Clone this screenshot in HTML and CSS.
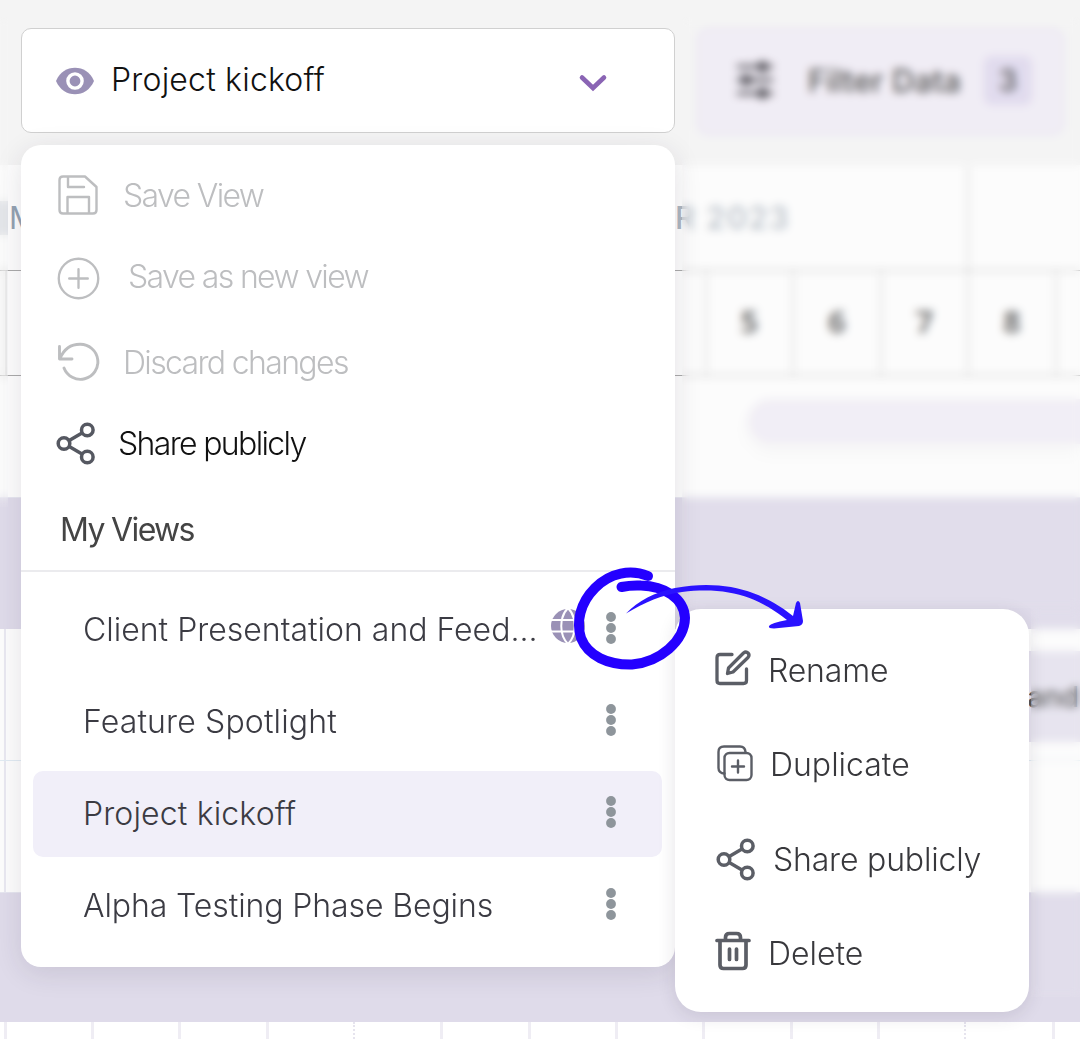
FILE: index.html
```html
<!DOCTYPE html>
<html lang="en">
<head>
<meta charset="utf-8">
<title>Project views</title>
<link rel="stylesheet" href="styles.css">
</head>
<body>
<svg class="sprite" aria-hidden="true">
  <symbol id="share" viewBox="0 0 40 44">
    <g fill="none" stroke="currentColor" stroke-width="3.5"><circle cx="8" cy="21.500" r="5.800"/><circle cx="31.300" cy="8" r="5.800"/><circle cx="31.300" cy="35" r="5.800"/><path d="M13.200 18.500 26 11.100M13.200 24.500 26 31.900"/></g>
  </symbol>
  <symbol id="dots" viewBox="0 0 10 32">
    <g fill="currentColor"><circle cx="5" cy="5" r="4.900"/><circle cx="5" cy="16" r="4.900"/><circle cx="5" cy="27" r="4.900"/></g>
  </symbol>
</svg>
<div class="page">
  <header class="toolbar">
    <div class="select">
      <svg class="eye" viewBox="0 0 40 28"><path fill="#9a91b6" d="M1 14C5 5 12 .800 20 .800S35 5 39 14C35 23 28 27.200 20 27.200S5 23 1 14Z"/><circle cx="20" cy="14" r="7.100" fill="#9a91b6" stroke="#fff" stroke-width="3.400"/></svg>
      <span class="select-text">Project kickoff</span>
      <svg class="chevron" viewBox="0 0 28 18"><path d="M3 3.500 14 14 25 3.500" fill="none" stroke="#8a64b4" stroke-width="4.600" stroke-linecap="round"/></svg>
    </div>
    <div class="filter">
      <svg class="sliders" viewBox="0 0 40 40"><g stroke="#4a4850" stroke-width="4" fill="none"><path d="M1 6h38M1 20h38M1 34h38"/></g><g fill="#4a4850"><circle cx="28" cy="6" r="6"/><circle cx="11" cy="20" r="6"/><circle cx="28" cy="34" r="6"/></g></svg>
      <span class="filter-text">Filter Data</span><span class="count">3</span>
    </div>
  </header>
  <div class="months">
    <div class="month prev"><i></i>M</div><div class="month current">APR 2023</div><div class="month"></div>
  </div>
  <div class="days">
    <b></b><b></b><b></b><b></b><b></b><b></b><b></b><b></b><b></b><b>5</b><b>6</b><b>7</b><b>8</b><b></b>
  </div>
  <div class="lane first"><div class="bar"></div></div>
  <div class="lane band tall"></div>
  <div class="lane grid top"><div class="task">Test and</div></div>
  <div class="lane grid mid"></div>
  <div class="lane band short"></div>
  <div class="ticks"><i></i><i></i><i></i><i></i><i class="dotted"></i><i></i><i></i><i></i><i></i><i></i><i></i><i class="dotted"></i><i></i></div>

  <div class="veil left"></div>
  <div class="veil right"></div>
  <div class="veil lower"></div>

  <div class="menu">
    <div class="action save"><svg viewBox="0 0 40 40"><g fill="none" stroke="currentColor" stroke-width="2.400" stroke-linejoin="round" stroke-linecap="round"><path d="M5 1.500H27L38.500 12V35Q38.500 38.500 35 38.500H5Q1.500 38.500 1.500 35V5Q1.500 1.500 5 1.500ZM10 2V12H26M9.500 38V22H31V38"/></g></svg><span>Save View</span></div>
    <div class="action new"><svg viewBox="0 0 44 44"><g fill="none" stroke="currentColor" stroke-width="2.400" stroke-linecap="round"><circle cx="22" cy="22" r="20.200"/><path d="M12.500 22h19M22 12.500v19"/></g></svg><span>Save as new view</span></div>
    <div class="action discard"><svg viewBox="0 0 42 40"><g fill="none" stroke="currentColor" stroke-width="2.900" stroke-linecap="round" stroke-linejoin="round"><path d="M2.500 4.500V17H15M3 16.500C7 7 14 2.300 23 2.300A17.500 17.500 0 1 1 7 26"/></g></svg><span>Discard changes</span></div>
    <div class="action share"><svg viewBox="0 0 40 44"><use href="#share"/></svg><span>Share publicly</span></div>
    <h2>My Views</h2>
    <div class="views">
      <div class="view"><span>Client Presentation and Feed...</span><svg class="globe" viewBox="0 0 34 34"><circle cx="17" cy="17" r="17" fill="#9a91b6"/><path d="M0 11H34M0 22.500H34M17 -1C8 8 8 26 17 35M17 -1C26 8 26 26 17 35" fill="none" stroke="#fff" stroke-width="2"/></svg><svg class="dots"><use href="#dots"/></svg></div>
      <div class="view"><span class="wide">Feature Spotlight</span><svg class="dots"><use href="#dots"/></svg></div>
      <div class="view active"><span class="wide">Project kickoff</span><svg class="dots"><use href="#dots"/></svg></div>
      <div class="view"><span class="tight">Alpha Testing Phase Begins</span><svg class="dots"><use href="#dots"/></svg></div>
    </div>
  </div>

  <div class="submenu">
    <div class="item rename"><svg viewBox="0 0 36 36"><g fill="none" stroke="currentColor" stroke-width="3.300" stroke-linecap="round" stroke-linejoin="round"><path d="M17 4.500H5Q2 4.500 2 7.500V30.500Q2 33.500 5 33.500H28.500Q31.500 33.500 31.500 30.500V19"/><path d="M12.500 23.500 13.500 18 28.500 3Q31 1 33 3Q35 5 33 7.500L18 22Z"/></g></svg><span>Rename</span></div>
    <div class="item duplicate"><svg viewBox="0 0 36 36"><g fill="none" stroke="currentColor" stroke-width="2.400" stroke-linecap="round"><rect x="7.500" y="8" width="27" height="27" rx="5"/><path d="M7.500 28.500C3.500 28.500 1.500 26 1.500 23V7Q1.500 1.500 7 1.500H23Q28 1.500 28.500 7M15 21.500H27M21 15.500V27.500"/></g></svg><span>Duplicate</span></div>
    <div class="item publish"><svg viewBox="0 0 40 44"><use href="#share"/></svg><span>Share publicly</span></div>
    <div class="item delete"><svg viewBox="0 0 36 40"><g fill="none" stroke="currentColor" stroke-width="3.700" stroke-linecap="round" stroke-linejoin="round"><path d="M2 9.500H34M5 10V34Q5 37.500 8.500 37.500H27.500Q31 37.500 31 34V10M10.500 9V6.500Q10.500 2.500 14.500 2.500H21.500Q25.500 2.500 25.500 6.500V9M14.500 18V28.500M21.500 18V28.500"/></g></svg><span>Delete</span></div>
  </div>

  <svg class="scribble" viewBox="560 560 260 120">
    <path d="M648 576C631 569 610 572.500 595 588C580 603 576 622 581 638C588 656 608 665 632 664.500C660 662 684.500 641 685 618C684 598 664 586 641 585.500Q631 585 621.500 587" fill="none" stroke="#2400ff" stroke-width="10" stroke-linecap="round"/>
    <path fill="#2a12ff" d="M626 613.500C638 601 655 592 675 588C724 579 762 591 793 616L796 603Q798 599 800 603L803 621Q803 625 799 626L774 628.500Q768 628.500 769 626Q771 623 787 620C758 597 728 586.500 682 592C662 595 645 602 626 613.500Z"/>
  </svg>
</div>
</body>
</html>
```
FILE: styles.css
```css
* { box-sizing: border-box; }
body { margin: 0; font-family: Inter, "Liberation Sans", sans-serif; }
.sprite { position: absolute; width: 0; height: 0; }
.page { position: relative; width: 1080px; height: 1039px; overflow: hidden; background: #fdfdfd; display: flex; flex-direction: column; }
.page > * { flex-shrink: 0; }
svg { display: block; flex: none; overflow: visible; }

.toolbar { height: 165px; padding: 28px 16px 0 21px; background: #f4f4f4; display: flex; align-items: flex-start; gap: 22px; }
.select { width: 654px; height: 105px; padding: 0 67px 0 33px; border: 1.500px solid #d0d0d0; border-radius: 10px; background: #fff; display: flex; align-items: center; }
.eye { width: 40px; height: 28px; }
.select-text { margin: -3px auto 0 16px; font-size: 32px; font-weight: 340; letter-spacing: .2px; color: #111; white-space: nowrap; }
.chevron { width: 28px; height: 18px; margin-top: 4px; }
.filter { width: 367px; height: 107px; padding: 0 30px 3px 37px; border: 2px solid #e9e5f0; border-radius: 12px; background: #f0ecf5; display: flex; align-items: center; }
.sliders { width: 38px; height: 38px; margin-right: 34px; }
.filter-text { font-size: 31px; font-weight: 500; letter-spacing: .15px; color: #444; white-space: nowrap; }
.count { width: 48px; height: 49px; margin-left: auto; border-radius: 8px; background: #dfd9ee; display: grid; place-items: center; font-size: 30px; font-weight: 500; color: #444; }

.months { height: 105px; display: flex; font-size: 31px; font-weight: 400; color: #94a2b2; }
.month { flex: 1; display: flex; align-items: center; white-space: nowrap; }
.month.prev { flex: 0 0 300px; }
.month.prev i { width: 8px; height: 34px; background: #e3e5e9; margin-right: 1px; }
.month.current { flex: 0 0 669px; justify-content: flex-end; padding-right: 177px; border-right: 2px solid #ddd; color: #adb6c0; font-weight: 500; letter-spacing: 1.500px; }
.days { height: 106px; margin-left: -81px; display: grid; grid-template-columns: repeat(14, 87.500px); border-top: 1.500px solid #aaa; border-bottom: 1.500px solid #aaa; }
.days b { padding-bottom: 4px; border-right: 2px solid #ddd; display: grid; place-items: center; font: 700 31px "Open Sans", sans-serif; color: #666; }
.lane { border-bottom: 1px solid #e6e6f0; }
.lane.first { height: 122px; padding: 23px 0 0 748px; }
.bar { height: 45px; border-radius: 22px 0 0 22px; background: #f1eef6; box-shadow: 0 8px 20px rgba(0,0,0,.03); }
.lane.band { background: #dfdbea; border: 0; }
.lane.tall { height: 131px; }
.lane.short { height: 129px; }
.lane.grid { background: linear-gradient(#e9e8f1, #e9e8f1) 4px 0 / 2px 100% no-repeat #fdfdfd; }
.lane.top { height: 132px; padding: 22px 0 0 942px; border-bottom-color: #e1ebf3; }
.task { height: 91px; background: #e6e3ef; display: flex; align-items: center; justify-content: flex-end; padding-right: 1px; font-size: 29px; font-weight: 500; color: #555; white-space: nowrap; }
.lane.mid { height: 132px; }
.ticks { height: 17px; padding-left: 3.500px; display: grid; grid-template-columns: repeat(13, 87.350px); background: #fff; }
.ticks i { border-left: 3px solid #efedf4; }
.ticks .dotted { border-left: 2px dotted #e6e4ee; }

.veil { position: absolute; backdrop-filter: blur(4.500px); background: rgba(250,250,250,.1); }
.veil.left { left: 0; top: 17px; width: 8px; height: 490px; }
.veil.right { left: 682px; top: 17px; width: 398px; height: 591px; }
.veil.lower { left: 1031px; top: 608px; width: 49px; height: 389px; }

.menu { position: absolute; left: 21px; top: 145px; width: 654px; height: 822px; border-radius: 20px; background: #fff; box-shadow: 0 6px 28px rgba(40,30,60,.12); display: flex; flex-direction: column; }
.action { display: flex; align-items: center; color: #bdbec0; }
.action span, .view span, .item span { font-size: 32px; line-height: 38px; font-weight: 330; white-space: nowrap; }
.action span { margin-top: 1px; letter-spacing: -1.650px; }
.save { height: 62px; margin-top: 19px; padding-left: 37px; gap: 25px; }
.save svg { width: 40px; height: 40px; }
.new { height: 84px; padding: 16px 0 0 36px; gap: 28px; }
.new svg { width: 43px; height: 43px; margin-top: 4px; }
.discard { height: 70px; padding: 0 0 0 36px; gap: 24px; margin-top: 17px; }
.discard svg { width: 42px; height: 40px; }
.action.share { height: 80px; margin-top: 7px; padding-left: 35px; gap: 22px; color: #555861; }
.share svg { width: 40px; height: 44px; }
.action.share span { margin-top: 0; color: #111; }
.menu h2 { margin: 5px 0 0; height: 83px; padding: 0 0 0 39px; border-bottom: 2px solid #ebebee; display: flex; align-items: center; font-size: 32px; font-weight: 400; letter-spacing: -1.650px; color: #444; }
.views { flex: 1; padding: 15px 13px 0 12px; display: flex; flex-direction: column; gap: 6px; }
.view { height: 86px; padding: 0 46px 5px 50px; border-radius: 10px; display: flex; align-items: center; color: #3b3b43; }
.view span { margin-top: 5px; }
.view .wide { letter-spacing: .14px; }
.view .tight { letter-spacing: -.1px; }
.view .dots { width: 10px; height: 32px; margin-left: auto; color: #8e959b; }
.view .globe { width: 34px; height: 34px; margin: -3px 0 0 auto; }
.view .globe + .dots { margin-left: 21px; }
.view.active { background: #f1eff9; }

.submenu { position: absolute; left: 675px; top: 609px; width: 354px; height: 403px; padding: 13px 0 0 40px; border-radius: 26px; background: #fff; box-shadow: 0 4px 18px rgba(40,30,60,.12); color: #5b5e66; }
.item { height: 94.500px; display: flex; align-items: center; }
.item span { margin-top: 3px; color: #38383c; }
.rename svg { width: 36px; height: 36px; margin-top: -2px; }
.rename span { margin-left: 17px; letter-spacing: -.15px; }
.duplicate { padding-left: 2px; }
.duplicate svg { width: 36px; height: 36px; margin-top: -1px; }
.duplicate span { margin: 2px 0 0 17px; }
.publish { padding-left: 1px; }
.publish svg { width: 40px; height: 44px; margin-top: 4px; }
.publish span { margin-left: 17px; letter-spacing: -.18px; }
.delete svg { width: 36px; height: 40px; margin-top: -4px; }
.delete span { margin: 3px 0 0 17px; }
.scribble { position: absolute; left: 560px; top: 560px; width: 260px; height: 120px; }
```
